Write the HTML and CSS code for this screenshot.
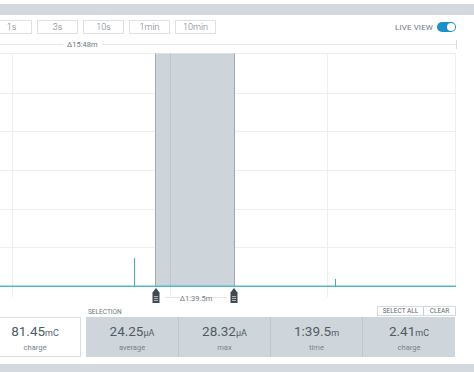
FILE: index.html
```html
<!DOCTYPE html>
<html>
<head>
<meta charset="utf-8">
<link rel="stylesheet" href="styles.css">
</head>
<body>
<div class="app">
  <div class="topband"></div>
  <div class="toolbar">
    <div class="zooms">
      <button class="zbtn first">1s</button>
      <button class="zbtn">3s</button>
      <button class="zbtn">10s</button>
      <button class="zbtn">1min</button>
      <button class="zbtn">10min</button>
    </div>
    <div class="live">
      <span class="live-label">LIVE VIEW</span>
      <span class="toggle"><span class="knob"></span></span>
    </div>
  </div>
  <div class="span-row">
    <span class="span-line short"></span>
    <span class="span-text">Δ15:48m</span>
    <span class="span-line"></span>
    <span class="span-tick"></span>
  </div>
  <svg class="chart" width="474" height="255" viewBox="0 0 474 255">
    <g stroke="#eceef0" stroke-width="1">
      <line x1="0" y1="3.5" x2="456" y2="3.5"/>
      <line x1="0" y1="43.5" x2="455" y2="43.5"/>
      <line x1="0" y1="81.5" x2="455" y2="81.5"/>
      <line x1="0" y1="120.5" x2="455" y2="120.5"/>
      <line x1="0" y1="159.5" x2="455" y2="159.5"/>
      <line x1="0" y1="197.5" x2="455" y2="197.5"/>
      <line x1="12.5" y1="3" x2="12.5" y2="247"/>
      <line x1="327.5" y1="3" x2="327.5" y2="247"/>
      <line x1="455.5" y1="3" x2="455.5" y2="236"/>
    </g>
    <rect x="155.5" y="3.5" width="79" height="232.5" fill="#cdd5db"/>
    <line x1="155.5" y1="3.5" x2="155.5" y2="237" stroke="#9ea9b1"/>
    <line x1="234.5" y1="3.5" x2="234.5" y2="237" stroke="#9ea9b1"/>
    <line x1="170.5" y1="3.5" x2="170.5" y2="236" stroke="#bcc5cc"/>
    <line x1="170.5" y1="237" x2="170.5" y2="247" stroke="#eceef0"/>
    <line x1="0" y1="236.25" x2="456" y2="236.25" stroke="#55b8c6" stroke-width="1.5"/>
    <line x1="134.5" y1="208" x2="134.5" y2="236" stroke="#3fadbd" stroke-width="1"/>
    <line x1="335.5" y1="229" x2="335.5" y2="236" stroke="#3fadbd" stroke-width="1"/>
    <g stroke="#e3e6e8">
      <line x1="165" y1="247.5" x2="180" y2="247.5"/>
      <line x1="212" y1="247.5" x2="227" y2="247.5"/>
    </g>
    <text x="196" y="250.5" class="sel-delta" text-anchor="middle">Δ1:39.5m</text>
    <g class="handle" transform="translate(156,0)">
      <path d="M0 238 L3.5 242.5 L3.5 253 L-3.5 253 L-3.5 242.5 Z" fill="#3f4a52"/>
      <g stroke="#c9d0d5" stroke-width="0.8">
        <line x1="-2" y1="246.5" x2="2" y2="246.5"/>
        <line x1="-2" y1="248.5" x2="2" y2="248.5"/>
        <line x1="-2" y1="250.5" x2="2" y2="250.5"/>
      </g>
    </g>
    <g class="handle" transform="translate(234,0)">
      <path d="M0 238 L3.5 242.5 L3.5 253 L-3.5 253 L-3.5 242.5 Z" fill="#3f4a52"/>
      <g stroke="#c9d0d5" stroke-width="0.8">
        <line x1="-2" y1="246.5" x2="2" y2="246.5"/>
        <line x1="-2" y1="248.5" x2="2" y2="248.5"/>
        <line x1="-2" y1="250.5" x2="2" y2="250.5"/>
      </g>
    </g>
  </svg>
  <div class="stats-head">
    <span class="sel-label">SELECTION</span>
    <div class="sel-btns">
      <button class="sbtn">SELECT ALL</button>
      <button class="sbtn">CLEAR</button>
    </div>
  </div>
  <div class="stats">
    <div class="cell total">
      <div class="val">81.45<span class="unit">mC</span></div>
      <div class="lbl">charge</div>
    </div>
    <div class="selbox">
      <div class="cell">
        <div class="val">24.25<span class="unit">μA</span></div>
        <div class="lbl">average</div>
      </div>
      <div class="cell">
        <div class="val">28.32<span class="unit">μA</span></div>
        <div class="lbl">max</div>
      </div>
      <div class="cell">
        <div class="val">1:39.5<span class="unit">m</span></div>
        <div class="lbl">time</div>
      </div>
      <div class="cell">
        <div class="val">2.41<span class="unit">mC</span></div>
        <div class="lbl">charge</div>
      </div>
    </div>
  </div>
  <div class="bottomband"></div>
</div>
</body>
</html>
```

FILE: styles.css
```css
* { box-sizing: border-box; }
html, body {
  margin: 0;
  padding: 0;
  background: #ffffff;
  width: 474px;
  height: 372px;
  overflow: hidden;
  scrollbar-width: none;
}
::-webkit-scrollbar { display: none; width: 0; height: 0; }
body {
  font-family: Roboto, "Liberation Sans", sans-serif;
  color: #5d6871;
}
.app {
  width: 474px;
  height: 372px;
  overflow: hidden;
  background: #ffffff;
}
.topband {
  height: 11px;
  margin-top: 4px;
  background: #d3d9de;
}
.toolbar {
  display: flex;
  justify-content: space-between;
  align-items: center;
  height: 14px;
  margin-top: 5px;
  padding-right: 18px;
}
.zooms { display: flex; gap: 5px; }
.zbtn {
  width: 41px;
  height: 14px;
  margin: 0;
  padding: 0;
  border: 1px solid #dde1e4;
  background: #fff;
  font-family: Roboto, "Liberation Sans", sans-serif;
  font-size: 9px;
  font-weight: 300;
  color: #6f7a83;
  line-height: 12px;
}
.zbtn.first { margin-left: -9px; }
.live { display: flex; align-items: center; gap: 4px; }
.live-label {
  font-size: 8px;
  color: #6c7780;
  letter-spacing: 0.1px;
}
.toggle {
  position: relative;
  width: 19px;
  height: 10px;
  border-radius: 5px;
  background: #1b8fc8;
}
.knob {
  position: absolute;
  right: 1px;
  top: 1px;
  width: 8px;
  height: 8px;
  border-radius: 50%;
  background: #fff;
}
.span-row {
  display: flex;
  align-items: center;
  height: 10px;
  margin-top: 5px;
  padding-right: 17px;
}
.span-line { flex: 1; height: 1px; background: #e4e7e9; }
.span-line.short { flex: 0 0 63px; }
.span-text {
  font-size: 7.5px;
  color: #6c7780;
  padding: 0 4px;
  white-space: nowrap;
}
.span-tick { width: 1px; height: 9px; background: #d9dde0; }
.chart { display: block; margin-top: 1px; }
.sel-delta {
  font-family: Roboto, "Liberation Sans", sans-serif;
  font-size: 7.5px;
  fill: #6c7780;
}
.stats-head {
  display: flex;
  justify-content: space-between;
  align-items: flex-end;
  height: 12px;
  padding-left: 88px;
  padding-right: 18px;
}
.sel-label {
  font-size: 6.5px;
  color: #6c7780;
  line-height: 8px;
  margin-bottom: 1px;
}
.sel-btns {
  display: flex;
  border: 1px solid #d4d9dd;
  background: #fff;
  margin-bottom: 1px;
}
.sbtn {
  margin: 0;
  padding: 0;
  height: 8px;
  border: 0;
  background: transparent;
  font-family: Roboto, "Liberation Sans", sans-serif;
  font-size: 6.5px;
  line-height: 8px;
  color: #5d6871;
  white-space: nowrap;
  text-align: center;
}
.sbtn:first-child { width: 46px; border-right: 1px solid #c9cfd3; }
.sbtn:last-child { width: 31px; }
.stats {
  display: flex;
  gap: 5px;
  height: 40px;
}
.cell {
  width: 92px;
  height: 40px;
  display: flex;
  flex-direction: column;
  align-items: center;
  padding-top: 6px;
  flex-shrink: 0;
}
.cell.total {
  margin-left: -11px;
  border: 1px solid #d8dde0;
  background: #fff;
  padding-top: 5px;
}
.selbox {
  display: flex;
  background: #cfd6db;
  width: 369px;
  flex-shrink: 0;
}
.selbox .cell + .cell { border-left: 1px solid #bec7ce; }
.selbox .cell:last-child { width: 93px; }
.val {
  font-size: 13.5px;
  color: #4f5b64;
  line-height: 16px;
  white-space: nowrap;
}
.unit { font-size: 9px; }
.lbl {
  font-size: 7.5px;
  color: #77828a;
  line-height: 9px;
  margin-top: 2px;
}
.bottomband {
  height: 8px;
  margin-top: 7px;
  background: #d3d9de;
}
```
